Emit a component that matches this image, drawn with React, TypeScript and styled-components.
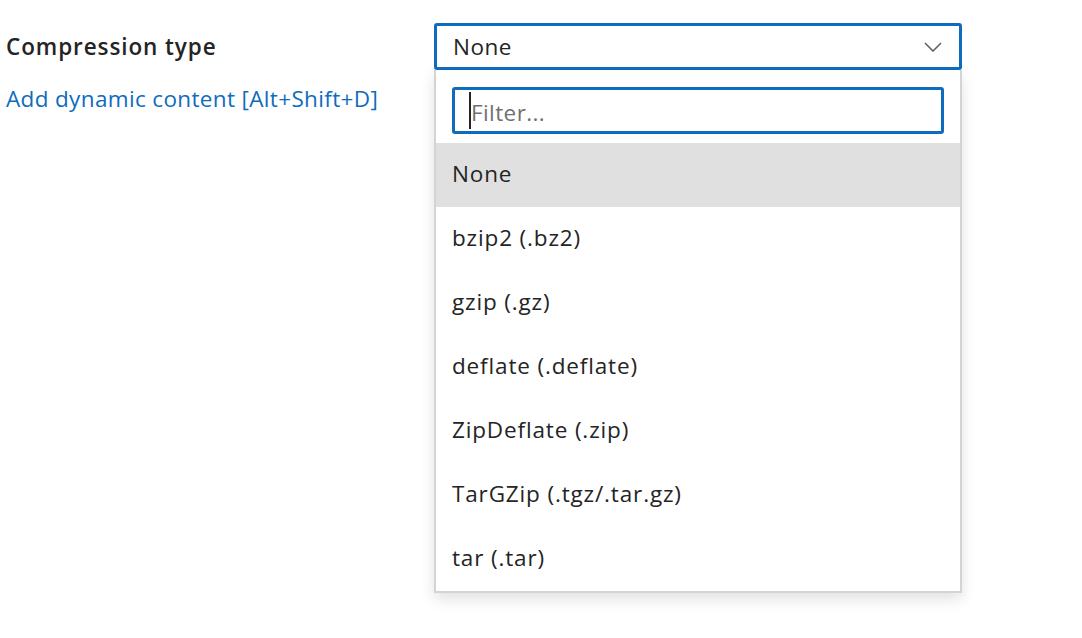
import * as React from "react";
import styled, { createGlobalStyle } from "styled-components";

const options = [
  "None",
  "bzip2 (.bz2)",
  "gzip (.gz)",
  "deflate (.deflate)",
  "ZipDeflate (.zip)",
  "TarGZip (.tgz/.tar.gz)",
  "tar (.tar)",
];

const GlobalStyle = createGlobalStyle`
  html, body {
    margin: 0;
    background: #fff;
  }
  body {
    font-family: "Open Sans", "Noto Sans", sans-serif;
    color: #242424;
  }
`;

const Chevron: React.FC = () => (
  <svg width="18" height="10" viewBox="0 0 18 10" fill="none">
    <polyline points="1,1 9,9 17,1" stroke="#616161" strokeWidth="1.6" />
  </svg>
);

const App: React.FC = () => {
  const selected = "None";

  return (
    <>
      <GlobalStyle />
      <Page>
        <LabelColumn>
          <Label>Compression type</Label>
          <DynamicLink>Add dynamic content [Alt+Shift+D]</DynamicLink>
        </LabelColumn>

        <SelectWrapper>
          <SelectBox>
            <SelectValue>{selected}</SelectValue>
            <Chevron />
          </SelectBox>

          <Popup>
            <FilterWrapper>
              <Caret />
              <FilterInput placeholder="Filter..." />
            </FilterWrapper>
            <OptionList>
              {options.map((o) => (
                <OptionRow key={o} $selected={o === selected}>
                  {o}
                </OptionRow>
              ))}
            </OptionList>
          </Popup>
        </SelectWrapper>
      </Page>
    </>
  );
};

export default App;

const Page = styled.div`
  display: grid;
  grid-template-columns: 428px 528px;
  align-items: start;
  padding: 23px 0 0 6px;
  min-height: 638px;
  box-sizing: border-box;
`;

const LabelColumn = styled.div`
  display: flex;
  flex-direction: column;
`;

const Label = styled.div`
  height: 47px;
  display: flex;
  align-items: center;
  font-size: 22.5px;
  font-weight: 600;
  letter-spacing: 0.9px;
  color: #242424;
`;

const DynamicLink = styled.a`
  margin-top: 14px;
  line-height: 30px;
  font-size: 22.5px;
  letter-spacing: 0.35px;
  color: #0f6cbd;
  cursor: pointer;
`;

const SelectWrapper = styled.div`
  position: relative;
`;

const SelectBox = styled.div`
  height: 47px;
  box-sizing: border-box;
  border: 3px solid #0f6cbd;
  border-radius: 3px;
  display: flex;
  align-items: center;
  justify-content: space-between;
  padding: 0 17px 0 16px;
`;

const SelectValue = styled.span`
  font-size: 22.5px;
  letter-spacing: 0.5px;
  color: #242424;
`;

const Popup = styled.div`
  position: absolute;
  top: 100%;
  left: 0;
  width: 100%;
  box-sizing: border-box;
  background: #fff;
  border: 2px solid #d4d4d4;
  border-top: none;
  padding-top: 17px;
  box-shadow: 0 6px 14px rgba(0, 0, 0, 0.12);
`;

const FilterWrapper = styled.div`
  position: relative;
  margin: 0 16px 9px;
`;

const FilterInput = styled.input`
  display: block;
  width: 100%;
  height: 47px;
  box-sizing: border-box;
  border: 3px solid #0f6cbd;
  border-radius: 3px;
  padding: 3px 16px 0;
  font-family: inherit;
  font-size: 22.5px;
  letter-spacing: 0.4px;
  outline: none;
  &::placeholder {
    color: #707070;
  }
`;

const Caret = styled.span`
  position: absolute;
  left: 17px;
  top: 5px;
  width: 2px;
  height: 37px;
  background: #242424;
`;

const OptionList = styled.div`
  display: flex;
  flex-direction: column;
`;

const OptionRow = styled.div<{ $selected?: boolean }>`
  height: 64px;
  box-sizing: border-box;
  display: flex;
  align-items: center;
  padding: 0 0 3px 16px;
  font-size: 22.5px;
  letter-spacing: 0.85px;
  color: #242424;
  background: ${(p) => (p.$selected ? "#e0e0e0" : "#fff")};
`;
